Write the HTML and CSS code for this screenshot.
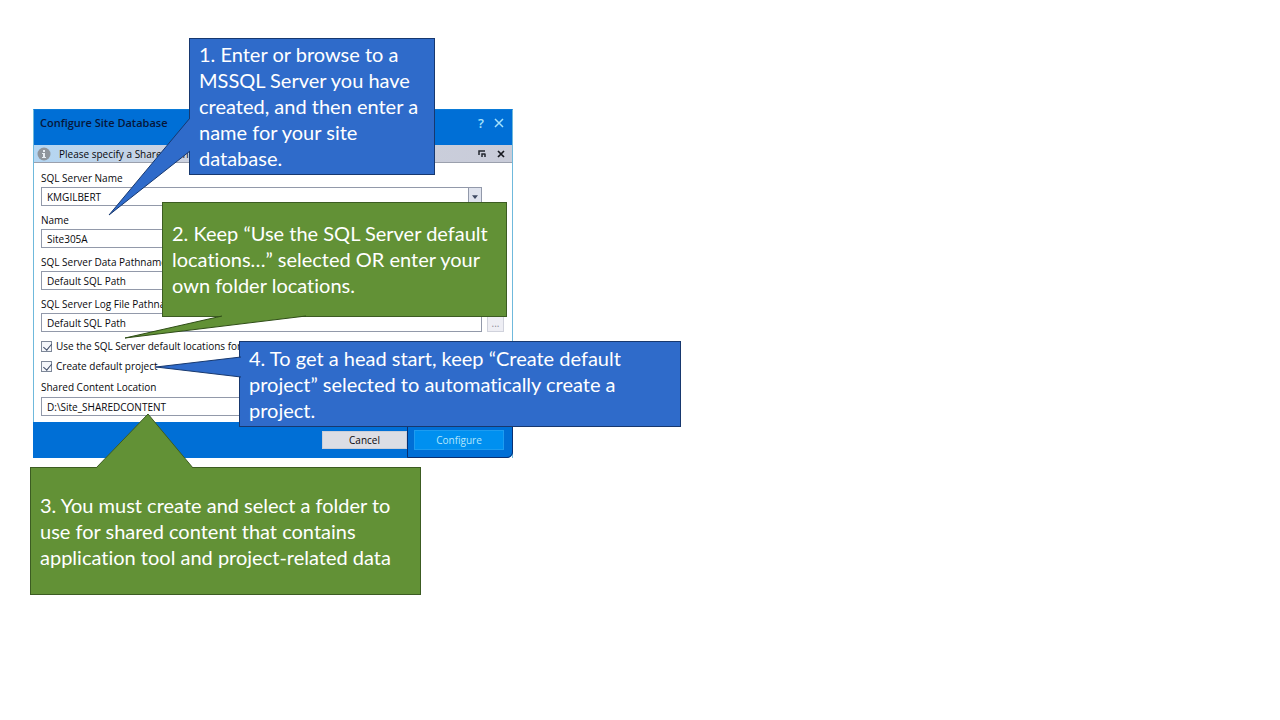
FILE: index.html
```html
<!DOCTYPE html>
<html lang="en">
<head>
    <meta charset="UTF-8">
    <title>Configure Site Database</title>
    <meta name="viewport" content="width=device-width, initial-scale=1.0">
    <link rel="stylesheet" href="styles.css">
</head>
<body>
    <main class="guide">
        <form class="dialog">
            <header class="title-bar">
                <h1>Configure Site Database</h1>
                <button type="button" class="title-btn" aria-label="Help">?</button>
                <button type="button" class="title-btn" aria-label="Close">
                    <svg width="10" height="10" viewBox="0 0 10 10"><path d="M1 1L9 9M9 1L1 9" fill="none" stroke="#a5e2fb" stroke-width="1.5"/></svg>
                </button>
            </header>

            <div class="info-bar">
                <svg width="14" height="14" viewBox="0 0 14 14">
                    <circle cx="7" cy="7" r="6.5" fill="#8f959c"/>
                    <path d="M6 3h2v2H6zM5 6h3v4h1v1H5v-1h1V7H5z" fill="#e8edf2"/>
                </svg>
                <span class="info-text">Please specify a Shared Cont</span>
                <button type="button" class="info-btn" aria-label="Restore">
                    <svg width="8" height="8" viewBox="0 0 8 8"><path d="M1 5V1H7M7 3.500V7M4 7V4H7" fill="none" stroke="#22262e" stroke-width="1.5"/></svg>
                </button>
                <button type="button" class="info-btn" aria-label="Dismiss">
                    <svg width="8" height="8" viewBox="0 0 8 8"><path d="M1 1L7 7M7 1L1 7" fill="none" stroke="#16181f" stroke-width="1.7"/></svg>
                </button>
            </div>

            <div class="fields">
                <label for="server">SQL Server Name</label>
                <div class="combo">
                    <input type="text" id="server" value="KMGILBERT">
                    <button type="button" class="drop-btn" aria-label="Show servers">
                        <svg width="6" height="4" viewBox="0 0 8 5"><path d="M0 0H8L4 5Z" fill="#3f4a63"/></svg>
                    </button>
                </div>

                <label for="name">Name</label>
                <input type="text" id="name" value="Site305A">

                <label for="dataPath">SQL Server Data Pathname</label>
                <input type="text" id="dataPath" value="Default SQL Path">

                <label for="logPath">SQL Server Log File Pathname</label>
                <div class="path-row">
                    <input type="text" id="logPath" value="Default SQL Path">
                    <button type="button" class="browse-btn" aria-label="Browse">...</button>
                </div>

                <div class="checks">
                    <label class="check"><input type="checkbox" checked>Use the SQL Server default locations for d</label>
                    <label class="check"><input type="checkbox" checked>Create default project</label>
                </div>

                <label for="shared">Shared Content Location</label>
                <input type="text" id="shared" value="D:\Site_SHAREDCONTENT">
            </div>

            <footer class="actions">
                <button type="button" class="cancel-btn">Cancel</button>
                <div class="highlight">
                    <button type="submit" class="configure-btn">Configure</button>
                </div>
            </footer>
        </form>

        <!-- Numbered notes that lie over the dialog -->
        <div class="note blue note-server">
            <svg class="tail" width="82" height="98" viewBox="0 0 82 98">
                <path d="M82 0L1 97L82 33" fill="#2f6bca" stroke="#17386f"/>
            </svg>
            <p>1. Enter or browse to a MSSQL Server you have created, and then enter a name for your site database.</p>
        </div>
        <div class="note green note-paths">
            <svg class="tail" width="184" height="24" viewBox="0 0 184 24">
                <path d="M98 1L1 23L182 1" fill="#629136" stroke="#2f4d17"/>
            </svg>
            <p>2. Keep “Use the SQL Server default locations…” selected OR enter your own folder locations.</p>
        </div>
        <div class="note green note-shared">
            <svg class="tail" width="98" height="56" viewBox="0 0 98 56">
                <path d="M1 55L53 1L98 55" fill="#629136" stroke="#3c5c22"/>
            </svg>
            <p>3. You must create and select a folder to use for shared content that contains application tool and project-related data</p>
        </div>
        <div class="note blue note-project">
            <svg class="tail" width="86" height="22" viewBox="0 0 86 22">
                <path d="M86 1L1 11L86 21" fill="#2f6bca" stroke="#17386f"/>
            </svg>
            <p>4. To get a head start, keep “Create default project” selected to automatically create a project.</p>
        </div>
    </main>
</body>
</html>
```

FILE: styles.css
```css
* {
    box-sizing: border-box;
}
body {
    margin: 0;
    background: #fff;
    font-family: 'Open Sans', 'Noto Sans', sans-serif;
    font-size: 10px;
    color: #08080c;
}
.guide {
    position: relative;
    min-height: 100vh;
    padding: 109px 33px 0;
}
button,
input {
    font: inherit;
    color: inherit;
}
button {
    display: flex;
    align-items: center;
    justify-content: center;
    padding: 0;
    border: none;
    background: none;
    cursor: pointer;
}

/* Dialog */
.dialog {
    max-width: 480px;
    border: 1px solid #6fb9dc;
    border-top-color: #0a7bd8;
    border-bottom: none;
}
.title-bar {
    display: flex;
    align-items: flex-start;
    gap: 8px;
    height: 35px;
    padding: 4px 8px 0 6px;
    background: #006fd6;
}
.title-bar h1 {
    flex: 1;
    margin: 0;
    font-size: 11px;
    line-height: 18px;
    font-weight: 600;
    color: #06163a;
}
.title-btn {
    width: 10px;
    height: 18px;
    font-size: 13px;
    font-weight: 600;
    color: #a5e2fb;
}
.info-bar {
    display: flex;
    align-items: center;
    gap: 8px;
    height: 18px;
    padding: 0 7px 0 3px;
    background: linear-gradient(to right, #b3d6f3, #ccd2e0 30%, #c9ccd9);
    border-bottom: 1px solid #9ba0ad;
}
.info-text {
    flex: 1;
}
.info-btn {
    width: 8px;
}
.info-btn + .info-btn {
    margin-left: 3px;
}

/* Form */
.fields {
    padding: 1px 30px 6px 7px;
}
.fields label {
    display: block;
    height: 23px;
    padding-top: 4px;
    line-height: 20px;
}
.fields input[type="text"] {
    display: block;
    width: 100%;
    height: 19px;
    padding: 0 5px;
    border: 1px solid #9299aa;
    background: #fff;
}
.combo,
.path-row {
    display: flex;
}
.combo input[type="text"] {
    border-right: none;
}
.drop-btn {
    flex: none;
    width: 14px;
    border: 1px solid #9299aa;
    background: #dfe3ee;
}
.path-row {
    gap: 5px;
    margin-right: -22px;
}
.browse-btn {
    flex: none;
    width: 17px;
    border: 1px solid #d0d2dc;
    background: #eeeef4;
    color: #8b8b98;
}
.checks {
    padding-top: 4px;
}
.fields .check {
    display: flex;
    align-items: center;
    gap: 4px;
    height: 20px;
    padding: 0;
}
.fields .checks + label {
    height: 21px;
    padding-top: 1px;
}
.check input {
    appearance: none;
    flex: none;
    width: 11px;
    height: 11px;
    margin: 0;
    border: 1px solid #7d8798;
    background: #f4f6fa;
    position: relative;
}
.check input:checked::after {
    content: "";
    position: absolute;
    left: 3px;
    top: 0;
    width: 4px;
    height: 7px;
    border: solid #3d4a66;
    border-width: 0 1px 1px 0;
    transform: rotate(40deg);
}
.actions {
    display: flex;
    justify-content: flex-end;
    align-items: center;
    height: 36px;
    margin: 0 -1px;
    background: #006fd6;
    border-bottom-right-radius: 6px;
}
.cancel-btn {
    width: 85px;
    height: 18px;
    background: #dcdde4;
    border: 1px solid #c9ced9;
}
.highlight {
    display: flex;
    align-items: center;
    height: 36px;
    padding: 0 8px 0 6px;
    border: 1px solid #0a2f70;
    border-bottom-right-radius: 6px;
}
.configure-btn {
    width: 90px;
    height: 20px;
    background: #0090f0;
    border: 1px solid #1d9cf0;
    color: #b4e6fb;
}

/* Notes */
.note {
    position: absolute;
    display: flex;
    align-items: center;
    padding: 0 9px 1px;
    border: 1px solid;
    font-family: Lato, 'Open Sans', sans-serif;
    font-size: 20px;
    font-variant-ligatures: none;
    line-height: 26px;
    color: #fff;
}
.note p {
    margin: 0;
}
.blue {
    background: #2f6bca;
    border-color: #17386f;
}
.green {
    background: #629136;
    border-color: #3c5c22;
}
.tail {
    position: absolute;
}
.note-server {
    left: 189px;
    top: 38px;
    width: 246px;
    height: 137px;
}
.note-server .tail {
    right: 100%;
    top: 79px;
}
.note-paths {
    left: 162px;
    top: 202px;
    width: 345px;
    height: 115px;
}
.note-paths .tail {
    left: -39px;
    top: 112px;
}
.note-shared {
    left: 30px;
    top: 467px;
    width: 391px;
    height: 128px;
}
.note-shared .tail {
    left: 64px;
    top: -55px;
}
.note-project {
    left: 239px;
    top: 341px;
    width: 442px;
    height: 86px;
}
.note-project .tail {
    right: 100%;
    top: 14px;
    margin-right: -1px;
}
```
